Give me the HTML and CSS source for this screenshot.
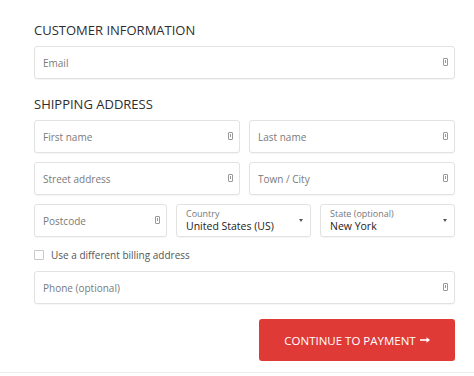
FILE: index.html
```html
<!DOCTYPE html>
<html lang="en">
<head>
    <meta charset="UTF-8">
    <meta name="viewport" content="width=device-width, initial-scale=1.0">
    <title>Checkout</title>
    <link rel="stylesheet" href="styles.css">
</head>
<body>
    <div class="checkout">
        <h2>Customer information</h2>
        <div class="field">
            <input type="email" placeholder="Email">
            <span class="key"></span>
        </div>

        <h2 class="second">Shipping address</h2>
        <div class="row two">
            <div class="field">
                <input type="text" placeholder="First name">
                <span class="key"></span>
            </div>
            <div class="field">
                <input type="text" placeholder="Last name">
                <span class="key"></span>
            </div>
        </div>
        <div class="row two">
            <div class="field">
                <input type="text" placeholder="Street address">
                <span class="key"></span>
            </div>
            <div class="field">
                <input type="text" placeholder="Town / City">
                <span class="key"></span>
            </div>
        </div>
        <div class="row three">
            <div class="field">
                <input type="text" placeholder="Postcode">
                <span class="key"></span>
            </div>
            <div class="select">
                <span class="small">Country</span>
                <span class="value">United States (US)</span>
                <span class="caret"></span>
            </div>
            <div class="select">
                <span class="small">State (optional)</span>
                <span class="value">New York</span>
                <span class="caret"></span>
            </div>
        </div>

        <label class="check">
            <input type="checkbox">
            <span>Use a different billing address</span>
        </label>

        <div class="field">
            <input type="tel" placeholder="Phone (optional)">
            <span class="key"></span>
        </div>

        <div class="actions">
            <button type="button">CONTINUE TO PAYMENT
                <svg width="10" height="6" viewBox="0 0 10 6"><path d="M0 3h7.5" stroke="#fff" stroke-width="1.6"/><path d="M6.5 0.3L10 3L6.5 5.7z" fill="#fff"/></svg>
            </button>
        </div>
    </div>
    <div class="bottom"></div>
</body>
</html>
```

FILE: styles.css
```css
body {
    margin: 0;
    background-color: #fff;
    font-family: 'Open Sans', 'Noto Sans', sans-serif;
    color: #333;
}
.checkout {
    width: 421px;
    padding: 20px 0 0 34px;
}
h2 {
    margin: 0 0 6px 0;
    font-size: 13px;
    line-height: 20px;
    font-weight: 400;
    text-transform: uppercase;
    color: #2e2e2e;
}
h2.second {
    margin-top: 15px;
}
.field {
    position: relative;
}
.field input {
    width: 100%;
    height: 33px;
    box-sizing: border-box;
    border: 1px solid #e2e2e2;
    border-radius: 3px;
    box-shadow: 0 1px 1px rgba(0, 0, 0, 0.04);
    padding: 0 22px 0 8px;
    font-family: 'Open Sans', sans-serif;
    font-size: 10px;
    color: #333;
    outline: none;
}
.field input::placeholder {
    color: #7a7a7a;
}
.key {
    position: absolute;
    right: 7px;
    top: 12px;
    width: 3px;
    height: 6px;
    border: 1px solid #999;
    border-radius: 1px;
}
.key::after {
    content: '';
    position: absolute;
    left: 1px;
    top: 1px;
    width: 1px;
    height: 3px;
    background-color: #999;
}
.row {
    display: grid;
    gap: 9px;
    margin-bottom: 9px;
}
.row.two {
    grid-template-columns: 1fr 1fr;
}
.row.three {
    grid-template-columns: 133px 1fr 1fr;
    margin-bottom: 0;
}
.select {
    position: relative;
    height: 33px;
    box-sizing: border-box;
    border: 1px solid #e2e2e2;
    border-radius: 3px;
    box-shadow: 0 1px 1px rgba(0, 0, 0, 0.04);
    padding: 3px 8px 0 9px;
    display: flex;
    flex-direction: column;
}
.select .small {
    font-size: 9px;
    line-height: 11px;
    color: #777;
}
.select .value {
    font-size: 10.5px;
    line-height: 15px;
    color: #222;
}
.caret {
    position: absolute;
    right: 7px;
    top: 14px;
    width: 0;
    height: 0;
    border-left: 2.5px solid transparent;
    border-right: 2.5px solid transparent;
    border-top: 3px solid #555;
}
.check {
    display: flex;
    align-items: center;
    gap: 7px;
    margin: 12px 0 10px 0;
    height: 12px;
    font-size: 10px;
    color: #555;
}
.check input {
    appearance: none;
    margin: 0;
    width: 10px;
    height: 10px;
    border: 1px solid #c8c8c8;
    border-radius: 1px;
    background-color: #fff;
}
.actions {
    display: flex;
    justify-content: flex-end;
    margin-top: 15px;
}
.actions button {
    width: 196px;
    height: 42px;
    display: flex;
    align-items: center;
    justify-content: center;
    gap: 4px;
    background-color: #df3a36;
    color: #fff;
    border: none;
    border-radius: 3px;
    font-family: 'Open Sans', sans-serif;
    font-size: 11.5px;
    cursor: pointer;
}
.actions button:hover {
    background-color: #c9302c;
}
.bottom {
    margin-top: 11px;
    border-top: 1px solid #ececec;
}
```
